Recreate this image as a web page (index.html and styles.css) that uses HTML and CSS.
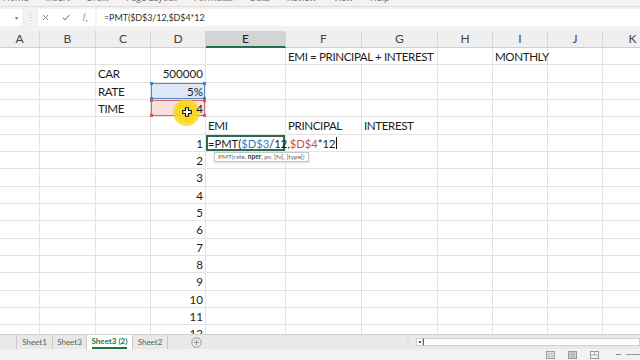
FILE: index.html
```html
<!DOCTYPE html>
<html lang="en">
<head>
<meta charset="utf-8">
<title>Excel - EMI</title>
<link rel="stylesheet" href="styles.css">
</head>
<body>
<div class="app">
  <div class="ribbon">
    <span>Home</span><span>Insert</span><span>Draw</span><span>Page Layout</span><span>Formulas</span><span>Data</span><span>Review</span><span>View</span><span>Help</span>
  </div>

  <div class="fbar">
    <div class="namebox"><span class="dd">&#9662;</span></div>
    <div class="vsep">&#8942;</div>
    <div class="fbtns">
      <svg class="ico" width="7" height="7" viewBox="0 0 7 7"><path d="M1 1L6 6M6 1L1 6" stroke="#8a8a8a" stroke-width="1" fill="none"/></svg>
      <svg class="ico" width="8" height="7" viewBox="0 0 8 7"><path d="M0.8 3.6L3 5.8L7.4 1" stroke="#8a8a8a" stroke-width="1.1" fill="none"/></svg>
      <span class="fx">f<sub>x</sub></span>
    </div>
    <div class="finput">=PMT($D$3/12,$D$4*12</div>
  </div>

  <div class="sheet">
    <div class="grid">
      <div class="h">A</div><div class="h">B</div><div class="h">C</div><div class="h">D</div><div class="h sel">E</div><div class="h">F</div><div class="h">G</div><div class="h">H</div><div class="h">I</div><div class="h">J</div><div class="h">K</div>

      <div class="c"></div><div class="c"></div><div class="c"></div><div class="c"></div><div class="c"></div><div class="c span2">EMI = PRINCIPAL + INTEREST</div><div class="c"></div><div class="c">MONTHLY</div><div class="c"></div><div class="c"></div>

      <div class="c"></div><div class="c"></div><div class="c">CAR</div><div class="c r n">500000</div><div class="c"></div><div class="c"></div><div class="c"></div><div class="c"></div><div class="c"></div><div class="c"></div><div class="c"></div>

      <div class="c"></div><div class="c"></div><div class="c">RATE</div><div class="c r n hl blue">5%</div><div class="c"></div><div class="c"></div><div class="c"></div><div class="c"></div><div class="c"></div><div class="c"></div><div class="c"></div>

      <div class="c"></div><div class="c"></div><div class="c">TIME</div><div class="c r n hl red"><span class="top">4</span></div><div class="c"></div><div class="c"></div><div class="c"></div><div class="c"></div><div class="c"></div><div class="c"></div><div class="c"></div>

      <div class="c"></div><div class="c"></div><div class="c"></div><div class="c"></div><div class="c">EMI</div><div class="c">PRINCIPAL</div><div class="c">INTEREST</div><div class="c"></div><div class="c"></div><div class="c"></div><div class="c"></div>

      <div class="c"></div><div class="c"></div><div class="c"></div><div class="c r n">1</div><div class="c edit"><span class="etext">=PMT(<span class="ref-b">$D$3</span>/12,<span class="ref-r">$D$4</span>*12<span class="caret"></span></span><div class="tip">PMT(rate, <b>nper</b>, pv, [fv], [type])</div></div><div class="c"></div><div class="c"></div><div class="c"></div><div class="c"></div><div class="c"></div><div class="c"></div>

      <div class="c"></div><div class="c"></div><div class="c"></div><div class="c r n">2</div><div class="c"></div><div class="c"></div><div class="c"></div><div class="c"></div><div class="c"></div><div class="c"></div><div class="c"></div>
      <div class="c"></div><div class="c"></div><div class="c"></div><div class="c r n">3</div><div class="c"></div><div class="c"></div><div class="c"></div><div class="c"></div><div class="c"></div><div class="c"></div><div class="c"></div>
      <div class="c"></div><div class="c"></div><div class="c"></div><div class="c r n">4</div><div class="c"></div><div class="c"></div><div class="c"></div><div class="c"></div><div class="c"></div><div class="c"></div><div class="c"></div>
      <div class="c"></div><div class="c"></div><div class="c"></div><div class="c r n">5</div><div class="c"></div><div class="c"></div><div class="c"></div><div class="c"></div><div class="c"></div><div class="c"></div><div class="c"></div>
      <div class="c"></div><div class="c"></div><div class="c"></div><div class="c r n">6</div><div class="c"></div><div class="c"></div><div class="c"></div><div class="c"></div><div class="c"></div><div class="c"></div><div class="c"></div>
      <div class="c"></div><div class="c"></div><div class="c"></div><div class="c r n">7</div><div class="c"></div><div class="c"></div><div class="c"></div><div class="c"></div><div class="c"></div><div class="c"></div><div class="c"></div>
      <div class="c"></div><div class="c"></div><div class="c"></div><div class="c r n">8</div><div class="c"></div><div class="c"></div><div class="c"></div><div class="c"></div><div class="c"></div><div class="c"></div><div class="c"></div>
      <div class="c"></div><div class="c"></div><div class="c"></div><div class="c r n">9</div><div class="c"></div><div class="c"></div><div class="c"></div><div class="c"></div><div class="c"></div><div class="c"></div><div class="c"></div>
      <div class="c"></div><div class="c"></div><div class="c"></div><div class="c r n">10</div><div class="c"></div><div class="c"></div><div class="c"></div><div class="c"></div><div class="c"></div><div class="c"></div><div class="c"></div>
      <div class="c"></div><div class="c"></div><div class="c"></div><div class="c r n">11</div><div class="c"></div><div class="c"></div><div class="c"></div><div class="c"></div><div class="c"></div><div class="c"></div><div class="c"></div>
      <div class="c"></div><div class="c"></div><div class="c"></div><div class="c r n">12</div><div class="c"></div><div class="c"></div><div class="c"></div><div class="c"></div><div class="c"></div><div class="c"></div><div class="c"></div>
    </div>

    <div class="spot"></div>
    <svg class="cursor" width="10" height="10" viewBox="0 0 10 10"><path d="M3.5 0.7H6.5V3.5H9.3V6.5H6.5V9.3H3.5V6.5H0.7V3.5H3.5Z" fill="#fff" stroke="#111" stroke-width="1.1" stroke-linejoin="round"/></svg>
  </div>

  <div class="tabs">
    <div class="lead"></div>
    <div class="tab t1">Sheet1</div>
    <div class="tab t2">Sheet3</div>
    <div class="tab active"><span>Sheet3 (2)</span></div>
    <div class="tab t4">Sheet2</div>
    <div class="add"><svg width="11" height="11" viewBox="0 0 11 11"><circle cx="5.5" cy="5.5" r="4.7" fill="none" stroke="#8a8a8a" stroke-width="0.9"/><path d="M5.5 3V8M3 5.5H8" stroke="#8a8a8a" stroke-width="0.9"/></svg></div>
    <div class="fill"></div>
    <div class="hscroll">
      <span class="hdots">&#8942;</span>
      <span class="harrow"></span>
      <span class="htrack"></span>
    </div>
  </div>

  <div class="status">
    <svg class="sico" width="9" height="8" viewBox="0 0 9 8"><rect x="0.5" y="0.5" width="8" height="7" fill="none" stroke="#9a9a9a"/><path d="M3 0.5V7.5M6 0.5V7.5M0.5 3H8.5M0.5 5.3H8.5" stroke="#b5b5b5" stroke-width="0.8"/></svg>
    <svg class="sico" width="9" height="8" viewBox="0 0 9 8"><rect x="0.5" y="0.5" width="8" height="7" fill="#d2d2d2" stroke="#9a9a9a"/><rect x="2" y="1.5" width="5" height="5" fill="#bdbdbd"/></svg>
    <svg class="sico" width="9" height="8" viewBox="0 0 9 8"><rect x="0.5" y="0.5" width="8" height="7" fill="none" stroke="#9a9a9a"/><path d="M0.5 4H8.5M4.5 0.5V4" stroke="#9a9a9a" stroke-width="0.8"/></svg>
    <span class="minus"></span>
    <span class="slider"></span>
  </div>
</div>
</body>
</html>
```

FILE: styles.css
```css
* { box-sizing: border-box; margin: 0; padding: 0; }

html, body { width: 640px; height: 360px; overflow: hidden; }

body {
  background: #f3f2f1;
  font-family: Lato, "Open Sans", "Liberation Sans", sans-serif;
  color: #222;
}

.app { width: 640px; height: 360px; display: flex; flex-direction: column; }

/* ribbon tab strip (cut off at top, as in the capture) */
.ribbon {
  height: 7px;
  flex: none;
  overflow: hidden;
  display: flex;
  gap: 17px;
  padding-left: 3px;
  border-bottom: 1px solid #dddcdb;
  font-family: "Open Sans", sans-serif;
  font-size: 9px;
  color: #6a6a6a;
}
.ribbon span { margin-top: -8px; line-height: 12px; white-space: nowrap; }

/* formula bar */
.fbar {
  height: 21px;
  flex: none;
  display: flex;
  gap: 2px;
  padding: 2px 0;
}
.namebox {
  width: 22px;
  background: #fff;
  display: flex;
  align-items: center;
  justify-content: flex-end;
  padding-right: 4px;
}
.dd { font-size: 6px; color: #777; }
.vsep {
  width: 12px;
  display: flex;
  align-items: center;
  justify-content: center;
  font-size: 9px;
  color: #b8b8b8;
}
.fbtns {
  width: 57px;
  background: #fff;
  display: flex;
  align-items: center;
  gap: 13px;
  padding-left: 4px;
}
.fx {
  font-family: "Liberation Serif", serif;
  font-style: italic;
  font-size: 8px;
  color: #777;
}
.fx sub { font-size: 5px; }
.finput {
  flex: 1;
  background: #fff;
  display: flex;
  align-items: center;
  padding-left: 7px;
  font-size: 9px;
  color: #333;
  letter-spacing: -0.1px;
}

/* sheet */
.sheet {
  position: relative;
  margin-top: 3px;
  height: 303px;
  flex: none;
  overflow: hidden;
  background: #fff;
}
.grid {
  display: grid;
  grid-template-columns: 40px 56px 55px 55px 80px 76px 76px 55px 55px 55px 60px;
  grid-template-rows: 17px;
  grid-auto-rows: 17.33px;
  width: 663px;
}
.h {
  background: #efefef;
  border-right: 1px solid #d6d6d6;
  border-bottom: 1px solid #cdcdcd;
  text-align: center;
  font-size: 12px;
  line-height: 16px;
  color: #444;
}
.h.sel {
  background: #d4d4d4;
  border-bottom: 2px solid #217346;
  color: #222;
}
.c {
  border-right: 1px solid #e3e3e3;
  border-bottom: 1px solid #e3e3e3;
  font-size: 11.6px;
  letter-spacing: -0.4px;
  line-height: 17px;
  padding: 0 2px;
  white-space: nowrap;
  color: #1d1d1d;
}
.c.r { text-align: right; }
.c.n { letter-spacing: 0; }
.c.span2 { grid-column: span 2; }

.hl { position: relative; }
.hl.blue { background: #dde7f5; box-shadow: inset 0 0 0 1px #5a86c8; }
.hl.red { background: #f8e0df; box-shadow: inset 0 0 0 1px #cf6a6a; }
.hl::before {
  content: "";
  position: absolute;
  left: -1px;
  top: -1px;
  width: 3px;
  height: 3px;
}
.hl.blue::before { background: #4f7fc6; box-shadow: 53px 0 #4f7fc6, 0 15px #4f7fc6, 53px 15px #4f7fc6; }
.hl.red::before { background: #c95a5a; box-shadow: 53px 0 #c95a5a, 0 15px #c95a5a, 53px 15px #c95a5a; }
.top { position: relative; z-index: 5; }

.edit {
  position: relative;
  z-index: 2;
  overflow: visible;
  box-shadow: inset 0 0 0 2px #2b6a4e;
  background: #fff;
  letter-spacing: 0;
}
.etext {
  position: relative;
  display: inline-flex;
  align-items: center;
  color: #1d1d1d;
  font-size: 11.2px;
}
.ref-b { color: #3b79c3; }
.ref-r { color: #c8504d; }
.caret {
  display: inline-block;
  width: 1px;
  height: 12px;
  margin-left: 1px;
  background: #111;
}
.tip {
  position: absolute;
  left: 8px;
  top: 17px;
  padding: 0 3px;
  background: #fff;
  border: 1px solid #c6c6c6;
  box-shadow: 0 1px 2px rgba(0,0,0,0.15);
  font-size: 6.5px;
  line-height: 8px;
  color: #666;
  white-space: nowrap;
}
.tip b { color: #333; }

/* mouse spot */
.spot {
  position: absolute;
  left: 173px;
  top: 68px;
  width: 27px;
  height: 27px;
  border-radius: 50%;
  background: radial-gradient(circle, rgba(250,214,20,0.92) 50%, rgba(250,214,20,0.55) 80%, rgba(250,214,20,0) 100%);
  z-index: 3;
}
.cursor {
  position: absolute;
  left: 182px;
  top: 76px;
  z-index: 4;
}

/* sheet tabs */
.tabs {
  height: 15px;
  flex: none;
  display: flex;
  align-items: stretch;
  background: #e9e9e9;
  border-top: 1px solid #d2d2d2;
  font-size: 8px;
  color: #606060;
}
.lead { width: 17px; border-right: 1px solid #c8c8c8; }
.tab {
  display: flex;
  align-items: center;
  justify-content: center;
  border-right: 1px solid #c8c8c8;
}
.t1 { width: 36px; }
.t2 { width: 34px; }
.t4 { width: 35px; }
.tab.active {
  width: 46px;
  background: #fff;
  color: #217346;
  font-weight: bold;
}
.tab.active span { border-bottom: 2px solid #217346; line-height: 11px; }
.add {
  width: 39px;
  display: flex;
  align-items: center;
  justify-content: flex-end;
  padding-right: 5px;
}
.fill { flex: 1; }
.hscroll {
  width: 240px;
  display: flex;
  align-items: center;
}
.hdots { width: 16px; text-align: center; color: #b0b0b0; font-size: 8px; }
.harrow {
  width: 7px;
  height: 8px;
  background: #fff;
  border: 1px solid #d0d0d0;
  position: relative;
}
.harrow::after {
  content: "";
  position: absolute;
  left: 2px;
  top: 2px;
  width: 2px;
  height: 2px;
  background: #555;
}
.htrack {
  flex: 1;
  height: 8px;
  background: #fff;
  border: 1px solid #d0d0d0;
  border-left: 1px solid #666;
}

/* status bar */
.status {
  flex: 1;
  display: flex;
  align-items: center;
  padding-left: 546px;
  gap: 13px;
}
.sico { flex: none; }
.minus { width: 5px; height: 1px; background: #888; margin-left: 4px; }
.slider { flex: 1; height: 1px; background: #9a9a9a; margin-left: -8px; }
```
